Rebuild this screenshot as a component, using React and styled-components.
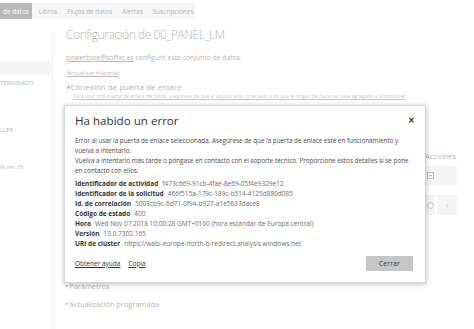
import React from "react";
import styled, { createGlobalStyle } from "styled-components";

const Global = createGlobalStyle`
  html, body { margin: 0; padding: 0; background: #fff; }
  body { font-family: "Open Sans", "Noto Sans", sans-serif; overflow: hidden; }
  * { box-sizing: border-box; }
`;

const Page = styled.div`
  position: relative;
  width: 474px;
  height: 329px;
  overflow: hidden;
  background: #fff;
`;

const TabBar = styled.div`
  display: flex;
  align-items: stretch;
  margin-top: 3px;
  width: 195px;
  height: 16px;
  background: #f7f7f7;
`;

const Tab = styled.div`
  display: flex;
  align-items: center;
  padding: 0 ${(p) => (p.$active ? "3px" : "5px")};
  margin-right: ${(p) => (p.$active ? "2px" : "0")};
  background: ${(p) => (p.$active ? "#b8b8b8" : "transparent")};
  color: ${(p) => (p.$active ? "#fff" : "#b4b4b4")};
  font-size: 6.4px;
  white-space: nowrap;
`;

const Body = styled.div`
  display: flex;
  align-items: flex-start;
  height: 310px;
`;

const Sidebar = styled.div`
  width: 53px;
  height: 296px;
  flex: none;
  padding-top: 28px;
  border-right: 1px solid #f0f0f0;
  margin-top: 14px;
  display: flex;
  flex-direction: column;
`;

const SideBlock = styled.div`
  height: 14px;
  background: #f5f5f5;
  margin-right: 1px;
`;

const SideItem = styled.div`
  font-size: 5.8px;
  color: #b8b8b8;
  white-space: nowrap;
  height: 10px;
  line-height: 10px;
  margin-top: ${(p) => p.$top}px;
`;

const Main = styled.div`
  flex: 1;
  padding-left: 13px;
  display: flex;
  flex-direction: column;
`;

const Title = styled.div`
  margin-top: 7px;
  height: 18px;
  font-size: 12px;
  letter-spacing: -0.42px;
  font-weight: 300;
  color: #b3b3b3;
  line-height: 18px;
  white-space: nowrap;
`;

const Owner = styled.div`
  margin-top: 10px;
  height: 8px;
  font-size: 6.8px;
  color: #b8b8b8;
  line-height: 8px;
  white-space: nowrap;
`;

const ULink = styled.span`
  text-decoration: underline;
`;

const HistoryLink = styled.div`
  margin-top: 7px;
  margin-left: 1px;
  height: 8px;
  font-size: 6px;
  color: #b8b8b8;
  line-height: 8px;
  text-decoration: underline;
  white-space: nowrap;
`;

const SectionHead = styled.div`
  margin-top: ${(p) => p.$top}px;
  height: 12px;
  font-size: ${(p) => (p.$big ? 8 : 7.4)}px;
  color: #b5b5b5;
  line-height: 12px;
  white-space: nowrap;
  display: flex;
  align-items: center;
  gap: 1px;
`;

const Caret = styled.span`
  font-size: 4.5px;
  line-height: 12px;
  color: #a8a8a8;
  font-family: "DejaVu Sans", sans-serif;
`;

const Faint = styled.div`
  margin-left: 7px;
  height: 7px;
  font-size: 4.95px;
  color: #c9c9c9;
  line-height: 7px;
  white-space: nowrap;
  text-decoration: underline;
`;

const GatewayTable = styled.div`
  margin-left: 7px;
  width: 384px;
  height: 172px;
  flex: none;
  display: flex;
  flex-direction: column;
  align-items: flex-end;
  padding-top: 51px;
`;

const ColHead = styled.div`
  font-size: 7.6px;
  color: #b8b8b8;
  line-height: 10px;
  height: 10px;
  padding-right: 1px;
  white-space: nowrap;
`;

const ActionRow = styled.div`
  display: flex;
  gap: 2px;
  margin-top: ${(p) => p.$top}px;
`;

const ActionCell = styled.div`
  width: ${(p) => p.$w}px;
  height: ${(p) => p.$h}px;
  background: #f5f5f5;
  display: flex;
  align-items: center;
  justify-content: ${(p) => (p.$center ? "center" : "flex-end")};
  padding-right: ${(p) => p.$pr || 0}px;
  color: #bbb;
  font-size: 7px;
`;

const Overlay = styled.div`
  position: absolute;
  left: 64px;
  top: 105px;
  width: 362px;
  height: 178px;
  background: #fff;
  border: 1px solid #d6d6d6;
  box-shadow: 0 1px 5px rgba(0, 0, 0, 0.28);
  padding: 6px 10px 0 10px;
  display: flex;
  flex-direction: column;
  color: #555;
`;

const ModalHead = styled.div`
  display: flex;
  justify-content: space-between;
  align-items: flex-start;
`;

const ModalTitle = styled.div`
  font-size: 11.6px;
  color: #333;
  line-height: 18px;
`;

const Close = styled.div`
  font-size: 8px;
  font-weight: 700;
  color: #333;
  line-height: 10px;
  margin-top: 3px;
`;

const Para = styled.p`
  margin: 0;
  font-size: 6.32px;
  line-height: 10px;
  color: #484848;
  white-space: nowrap;
`;

const Message = styled.div`
  margin-top: 6px;
`;

const Details = styled.div`
  margin-top: 3px;
`;

const DetailRow = styled.div`
  font-size: 6.5px;
  line-height: 10px;
  white-space: nowrap;
  color: #6e6e6e;
`;

const Label = styled.span`
  font-weight: 700;
  color: #333;
  margin-right: 4px;
`;

const Footer = styled.div`
  margin-top: 7px;
  display: flex;
  justify-content: space-between;
  align-items: center;
`;

const Links = styled.div`
  display: flex;
  gap: 8px;
  font-size: 6.5px;
  color: #333;
`;

const Button = styled.div`
  width: 47px;
  height: 15px;
  background: #c6c6c6;
  color: #333;
  font-size: 6.5px;
  letter-spacing: 0.3px;
  display: flex;
  align-items: center;
  justify-content: center;
  margin-right: 2px;
`;

const details = [
  ["Identificador de actividad", "f473c669-91cb-4fae-8e69-05f4e9329e12"],
  ["Identificador de la solicitud", "466f515a-179c-189c-b514-4125d880d085"],
  ["Id. de correlación", "5003cb9c-6d71-0f94-b927-a1e5633dace8"],
  ["Código de estado", "400"],
  ["Hora", "Wed Nov 07 2018 10:00:28 GMT+0100 (hora estándar de Europa central)"],
  ["Versión", "13.0.7302.165"],
  ["URI de clúster", "https://wabi-europe-north-b-redirect.analysis.windows.net"],
];

export default function App() {
  return (
    <Page>
      <Global />
      <TabBar>
        <Tab $active>de datos</Tab>
        <Tab>Libros</Tab>
        <Tab>Flujos de datos</Tab>
        <Tab>Alertas</Tab>
        <Tab>Suscripciones</Tab>
      </TabBar>
      <Body>
        <Sidebar>
          <SideBlock />
          <SideItem $top={3}>TERMINADO</SideItem>
          <SideItem $top={37}>LLER</SideItem>
          <SideItem $top={27}>N_rev.05</SideItem>
        </Sidebar>
        <Main>
          <Title>Configuración de 00_PANEL_LM</Title>
          <Owner>
            <ULink>powerbipe@soffac.es</ULink> configuró este conjunto de datos.
          </Owner>
          <HistoryLink>Actualizar historial</HistoryLink>
          <SectionHead $top={4} $big>
            <Caret>◢</Caret>Conexión de puerta de enlace
          </SectionHead>
          <Faint>
            Para usar una puerta de enlace de datos, asegúrese de que el equipo esté conectado y de que el origen de datos se haya agregado a Administrar
          </Faint>
          <GatewayTable>
            <ColHead>Acciones</ColHead>
            <ActionRow $top={5}>
              <ActionCell $w={39} $h={19} $pr={23}>
                <svg width="7" height="7" viewBox="0 0 7 7">
                  <rect x="0.5" y="0.5" width="6" height="6" fill="none" stroke="#c4c4c4" />
                  <line x1="2" y1="3.5" x2="5" y2="3.5" stroke="#c4c4c4" />
                </svg>
              </ActionCell>
            </ActionRow>
            <ActionRow $top={10}>
              <ActionCell $w={17} $h={20} $pr={1}>
                <svg width="7" height="7" viewBox="0 0 7 7">
                  <circle cx="3.5" cy="3.5" r="3" fill="none" stroke="#c4c4c4" />
                </svg>
              </ActionCell>
              <ActionCell $w={20} $h={20} $center>›</ActionCell>
            </ActionRow>
          </GatewayTable>
          <SectionHead $top={8}>
            <Caret>▸</Caret>Parámetros
          </SectionHead>
          <SectionHead $top={6}>
            <Caret>▸</Caret>Actualización programada
          </SectionHead>
        </Main>
      </Body>
      <Overlay>
        <ModalHead>
          <ModalTitle>Ha habido un error</ModalTitle>
          <Close>✕</Close>
        </ModalHead>
        <Message>
          <Para>
            Error al usar la puerta de enlace seleccionada. Asegúrese de que la puerta de enlace esté en funcionamiento y
            <br />
            vuelva a intentarlo.
          </Para>
          <Para>
            Vuelva a intentarlo más tarde o póngase en contacto con el soporte técnico. Proporcione estos detalles si se pone
            <br />
            en contacto con ellos.
          </Para>
        </Message>
        <Details>
          {details.map(([k, v]) => (
            <DetailRow key={k}>
              <Label>{k}</Label>
              {v}
            </DetailRow>
          ))}
        </Details>
        <Footer>
          <Links>
            <ULink>Obtener ayuda</ULink>
            <ULink>Copia</ULink>
          </Links>
          <Button>Cerrar</Button>
        </Footer>
      </Overlay>
    </Page>
  );
}
